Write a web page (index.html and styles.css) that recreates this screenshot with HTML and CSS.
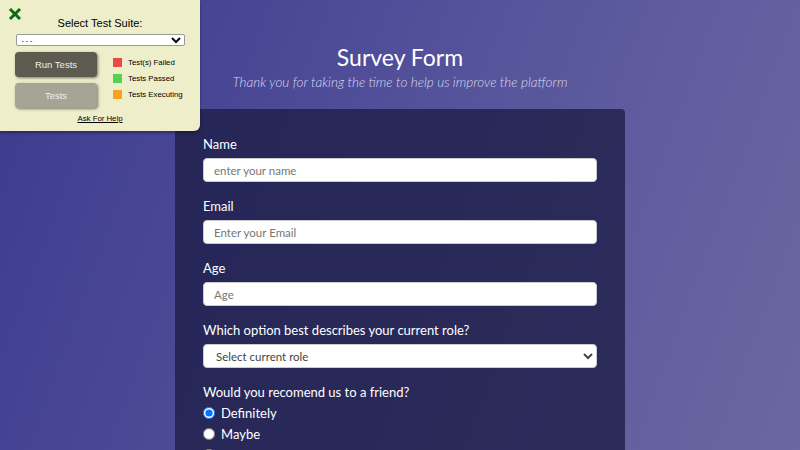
FILE: index.html
```html
<!DOCTYPE html>
<html>
<head>
<meta charset="utf-8">
<link rel="stylesheet" href="styles.css">
</head>
<body>
<div class="suite">
  <div class="suite-close">
    <svg width="14" height="14" viewBox="0 0 14 14"><path d="M2 2L12 12M12 2L2 12" stroke="#0b6a13" stroke-width="3" stroke-linecap="butt"/></svg>
  </div>
  <div class="suite-title">Select Test Suite:</div>
  <select class="suite-select"><option>- - -</option></select>
  <div class="suite-body">
    <div class="suite-buttons">
      <button class="btn btn-run">Run Tests</button>
      <button class="btn btn-tests">Tests</button>
    </div>
    <ul class="legend">
      <li><span class="sq red"></span>Test(s) Failed</li>
      <li><span class="sq green"></span>Tests Passed</li>
      <li><span class="sq orange"></span>Tests Executing</li>
    </ul>
  </div>
  <a class="help" href="#">Ask For Help</a>
</div>

<header class="head">
  <h1 class="title">Survey Form</h1>
  <p class="desc">Thank you for taking the time to help us improve the platform</p>
</header>

<form class="survey">
  <div class="group">
    <label class="lbl">Name</label>
    <input class="field" type="text" placeholder="enter your name">
  </div>
  <div class="group">
    <label class="lbl">Email</label>
    <input class="field" type="text" placeholder="Enter your Email">
  </div>
  <div class="group">
    <label class="lbl">Age</label>
    <input class="field" type="text" placeholder="Age">
  </div>
  <div class="group">
    <label class="lbl">Which option best describes your current role?</label>
    <select class="field sel"><option>Select current role</option></select>
  </div>
  <div class="group">
    <label class="lbl lbl-radio">Would you recomend us to a friend?</label>
    <label class="radio"><input type="radio" name="r" checked>Definitely</label>
    <label class="radio"><input type="radio" name="r">Maybe</label>
    <label class="radio"><input type="radio" name="r">Not sure</label>
  </div>
</form>
</body>
</html>
```
FILE: styles.css
```css
html, body { margin: 0; padding: 0; }
body {
  width: 800px;
  height: 450px;
  overflow: hidden;
  background: linear-gradient(110deg, #3c3a8e 0%, #4d4b97 35%, #5e5c9e 70%, #6a67a2 100%);
  font-family: Lato, "Noto Sans", sans-serif;
  color: #fff;
}
.suite {
  position: absolute;
  left: 0; top: 0;
  width: 200px;
  height: 131px;
  background: #efeecb;
  border-bottom-right-radius: 6px;
  box-shadow: 0 2px 3px rgba(0,0,0,0.35);
  font-family: "Liberation Sans", Arial, sans-serif;
  color: #000;
  z-index: 10;
}
.suite-close { position: absolute; left: 8px; top: 7px; width: 14px; height: 14px; }
.suite-close svg { display: block; }
.suite-title { text-align: center; font-size: 11px; padding-top: 17px; line-height: 13px; }
.suite-select {
  display: block;
  margin: 4px auto 0;
  width: 169px;
  height: 12px;
  font-size: 7px;
  padding: 0 1px;
  border: 1px solid #999;
  background: #fff;
  border-radius: 2px;
}
.suite-body { display: flex; padding: 6px 0 0 15px; gap: 16px; }
.suite-buttons { display: flex; flex-direction: column; gap: 6px; }
.btn {
  width: 82px;
  height: 25px;
  border: none;
  border-radius: 4px;
  color: #fff;
  font-family: "Liberation Sans", Arial, sans-serif;
  font-size: 9.5px;
  box-shadow: 1px 1px 3px rgba(0,0,0,0.5);
}
.btn-run { background: #5d5b4f; color: #eee; }
.btn-tests { background: #a5a495; color: #eee; }
.legend { list-style: none; margin: 0; padding: 5px 0 0; display: flex; flex-direction: column; gap: 6px; font-size: 7.8px; }
.legend li { display: flex; align-items: center; height: 10px; }
.sq { width: 9px; height: 9px; margin-right: 6px; display: inline-block; }
.red { background: #e84a45; }
.green { background: #52d152; }
.orange { background: #f5a21e; }
.help { display: block; text-align: center; font-size: 7.8px; color: #000; margin-top: 6px; }

.head { text-align: center; padding-top: 43px; }
.title { margin: 0; font-weight: 400; font-size: 23px; line-height: 28px; }
.desc { margin: 3px 0 0; font-style: italic; font-weight: 300; font-size: 13.5px; color: #d8d8ec; line-height: 16px; }

.survey {
  width: 450px;
  margin: 19px auto 0;
  box-sizing: border-box;
  padding: 27px 28px 20px;
  background: rgba(28, 30, 70, 0.78);
  border-radius: 4px;
  height: 400px;
}
.group { display: flex; flex-direction: column; margin-bottom: 16px; }
.lbl { font-size: 13px; line-height: 17px; margin-bottom: 5px; }
.lbl-radio { margin-bottom: 1px; }
.field {
  box-sizing: border-box;
  height: 24px;
  width: 100%;
  border: 1px solid #ccc;
  border-radius: 4px;
  padding: 0 10px;
  font-family: Lato, "Noto Sans", sans-serif;
  font-size: 11.5px;
  color: #333;
  background: #fff;
}
.field::placeholder { color: #777; }
.sel { padding: 0 8px; color: #444; }
.radio { display: flex; align-items: center; font-size: 13px; height: 21px; }
.radio input { margin: 0 6px 0 0; width: 12px; height: 12px; }
```
